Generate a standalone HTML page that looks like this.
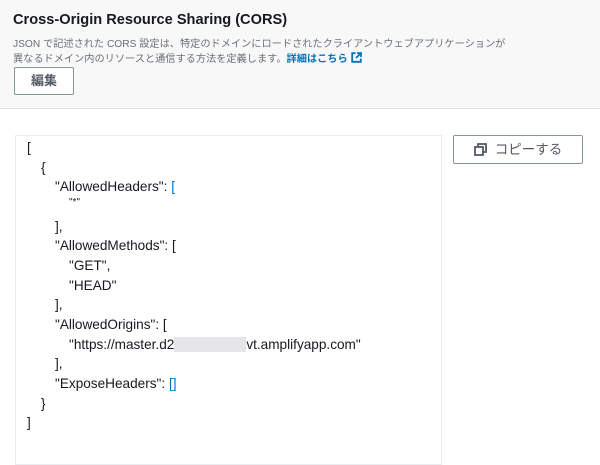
<!DOCTYPE html>
<html><head><meta charset="utf-8"><style>
body{margin:0;width:600px;height:455px;overflow:hidden;background:#fff;font-family:"Liberation Sans","Noto Sans CJK JP",sans-serif;}
.hdr{position:absolute;left:0;top:0;width:600px;height:108px;background:#f8f8f8;border-bottom:1px solid #e4e4e4;}
.t{position:absolute;left:13px;top:12px;font-size:14.6px;font-weight:bold;color:#16191f;}
.d{position:absolute;left:13px;top:37px;font-size:10.2px;line-height:15px;color:#687078;width:495px;}
.d a{color:#0073bb;font-weight:bold;text-decoration:none}
.btn{position:absolute;border:1px solid #879596;background:#fff;border-radius:2px;color:#545b64;font-weight:bold;font-size:13px;text-align:center;box-sizing:border-box;}
.code{position:absolute;left:15px;top:135px;width:427px;height:330px;border:1px solid #eaeded;box-sizing:border-box;}
.l{position:absolute;font-size:13.6px;color:#16191f;white-space:pre;}
.b{color:#0073bb}
</style></head><body>
<div class="hdr">
<div class="t">Cross-Origin Resource Sharing (CORS)</div>
<div class="d">JSON で記述された CORS 設定は、特定のドメインにロードされたクライアントウェブアプリケーションが異なるドメイン内のリソースと通信する方法を定義します。<a>詳細はこちら <svg width="11" height="11" viewBox="0 0 11 11" style="vertical-align:-1px"><path d="M4.5 1.2H1.2v8.6h8.6V6.5" fill="none" stroke="#0073bb" stroke-width="1.8"/><path d="M6 1h4v4M10 1L5 6" fill="none" stroke="#0073bb" stroke-width="1.8"/></svg></a></div>
<div class="btn" style="left:14px;top:67px;width:60px;height:28px;line-height:26px;">編集</div>
</div>
<div class="code"></div>
<div class="btn" style="left:453px;top:135px;width:130px;height:29px;line-height:27px;font-weight:normal;color:#545b64;font-size:13.5px"><svg width="13" height="13" viewBox="0 0 13 13" style="vertical-align:-2px;margin-right:8px"><rect x="1" y="4" width="8" height="8" fill="none" stroke="#545b64" stroke-width="1.8"/><path d="M4 4V1h8v8H9" fill="none" stroke="#545b64" stroke-width="1.8"/></svg>コピーする</div>
<div class="l" style="left:27px;top:140px">[</div>
<div class="l" style="left:41px;top:160px">{</div>
<div class="l" style="left:55px;top:179px">"AllowedHeaders": <span class="b">[</span></div>
<div class="l" style="left:69px;top:197px;font-size:10px">"*"</div>
<div class="l" style="left:55px;top:219px">],</div>
<div class="l" style="left:55px;top:238px">"AllowedMethods": [</div>
<div class="l" style="left:69px;top:258px">"GET",</div>
<div class="l" style="left:69px;top:278px">"HEAD"</div>
<div class="l" style="left:55px;top:297px">],</div>
<div class="l" style="left:55px;top:317px">"AllowedOrigins": [</div>
<div class="l" style="left:69px;top:337px">"https://master.d2<span style="display:inline-block;width:72px;height:15px;background:#e6e6e8;vertical-align:-3px"></span>vt.amplifyapp.com"</div>
<div class="l" style="left:55px;top:356px">],</div>
<div class="l" style="left:55px;top:376px">"ExposeHeaders": <span class="b">[]</span></div>
<div class="l" style="left:41px;top:396px">}</div>
<div class="l" style="left:27px;top:415px">]</div>
</body></html>
